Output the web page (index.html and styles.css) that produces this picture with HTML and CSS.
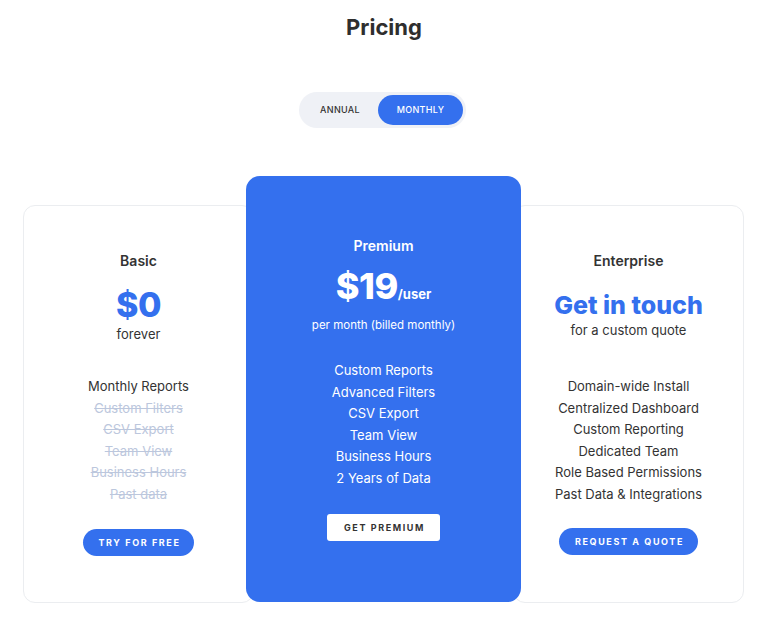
FILE: index.html
```html
<!DOCTYPE html>
<html>
<head>
<meta charset="utf-8">
<link rel="stylesheet" href="styles.css">
</head>
<body>
<h1 class="title">Pricing</h1>
<div class="toggle-wrap">
  <div class="toggle">
    <span class="opt">ANNUAL</span>
    <span class="opt active">MONTHLY</span>
  </div>
</div>
<div class="plans">
  <div class="card side">
    <div class="name">Basic</div>
    <div class="price">$0</div>
    <div class="sub">forever</div>
    <ul class="features">
      <li>Monthly Reports</li>
      <li class="off">Custom Filters</li>
      <li class="off">CSV Export</li>
      <li class="off">Team View</li>
      <li class="off">Business Hours</li>
      <li class="off">Past data</li>
    </ul>
    <a class="btn blue">TRY FOR FREE</a>
  </div>
  <div class="card premium">
    <div class="name">Premium</div>
    <div class="price"><span>$19</span><small>/user</small></div>
    <div class="sub small">per month (billed monthly)</div>
    <ul class="features">
      <li>Custom Reports</li>
      <li>Advanced Filters</li>
      <li>CSV Export</li>
      <li>Team View</li>
      <li>Business Hours</li>
      <li>2 Years of Data</li>
    </ul>
    <a class="btn white">GET PREMIUM</a>
  </div>
  <div class="card side">
    <div class="name">Enterprise</div>
    <div class="price touch">Get in touch</div>
    <div class="sub">for a custom quote</div>
    <ul class="features">
      <li>Domain-wide Install</li>
      <li>Centralized Dashboard</li>
      <li>Custom Reporting</li>
      <li>Dedicated Team</li>
      <li>Role Based Permissions</li>
      <li>Past Data &amp; Integrations</li>
    </ul>
    <a class="btn blue">REQUEST A QUOTE</a>
  </div>
</div>
</body>
</html>
```
FILE: styles.css
```css
* { box-sizing: border-box; }
html, body { margin: 0; padding: 0; background: #fff; }
body {
  font-family: "Inter", "Noto Sans", sans-serif;
  color: #333;
  width: 768px;
  height: 621px;
  overflow: hidden;
}
.title {
  margin: 0;
  padding-top: 12px;
  height: 44px;
  text-align: center;
  font-size: 22px;
  font-weight: 700;
  color: #2e2e2e;
  line-height: 30px;
}
.toggle-wrap {
  display: flex;
  justify-content: center;
  margin-top: 48px;
}
.toggle {
  display: flex;
  align-items: center;
  width: 167px;
  height: 36px;
  padding: 3px;
  margin-left: -3px;
  border-radius: 18px;
  background: #eff1f6;
}
.opt {
  font-size: 9px;
  font-weight: 500;
  letter-spacing: 0.3px;
  color: #333;
  height: 30px;
  line-height: 30px;
  text-align: center;
}
.opt:first-child { width: 76px; }
.opt.active {
  width: 85px;
  background: #3470ee;
  color: #fff;
  border-radius: 15px;
}
.plans {
  display: flex;
  align-items: flex-end;
  margin-top: 48px;
  padding-left: 23px;
}
.card {
  display: flex;
  flex-direction: column;
  align-items: center;
  text-align: center;
}
.side {
  width: 231px;
  height: 398px;
  border: 1px solid #ebedf0;
  border-radius: 12px;
  background: #fff;
  padding-top: 45px;
}
.premium {
  position: relative;
  z-index: 1;
  width: 275px;
  height: 426px;
  margin: 0 -8px 1px;
  background: #3470ee;
  border-radius: 14px;
  color: #fff;
  padding-top: 60px;
}
.name {
  font-size: 14px;
  font-weight: 600;
  line-height: 20px;
}
.price {
  margin-top: 14px;
  font-size: 34px;
  font-weight: 800;
  line-height: 40px;
  color: #3470ee;
  letter-spacing: -0.5px;
}
.price.touch {
  font-size: 25px;
  font-weight: 800;
  margin-top: 18px;
  line-height: 32px;
  letter-spacing: 0;
}
.premium .price {
  color: #fff;
  font-size: 36px;
  margin-top: 10px;
}
.premium .price small {
  font-size: 13px;
  font-weight: 700;
  letter-spacing: 0;
}
.sub {
  font-size: 13px;
  line-height: 18px;
  margin-top: 0;
}
.sub.small {
  font-size: 11.5px;
  margin-top: 2px;
}
.features {
  list-style: none;
  margin: 33px 0 0;
  padding: 0;
}
.side .touch + .sub + .features { margin-top: 37px; }
.premium .features { margin-top: 26px; }
.features li {
  font-size: 13px;
  line-height: 21.6px;
  white-space: nowrap;
}
.features li.off {
  color: #bcc7dd;
  text-decoration: line-through;
}
.btn {
  display: inline-block;
  font-size: 9px;
  font-weight: 700;
  letter-spacing: 1.6px;
  text-decoration: none;
  cursor: pointer;
}
.btn.blue {
  margin-top: 23px;
  height: 27px;
  line-height: 27px;
  padding: 0 14px 0 16px;
  border-radius: 14px;
  background: #3470ee;
  color: #fff;
}
.side .touch + .sub + .features + .btn { margin-top: 22px; }
.btn.white {
  margin-top: 24px;
  width: 113px;
  height: 27px;
  line-height: 27px;
  border-radius: 3px;
  background: #fff;
  color: #333;
  padding-left: 2px;
}
```
